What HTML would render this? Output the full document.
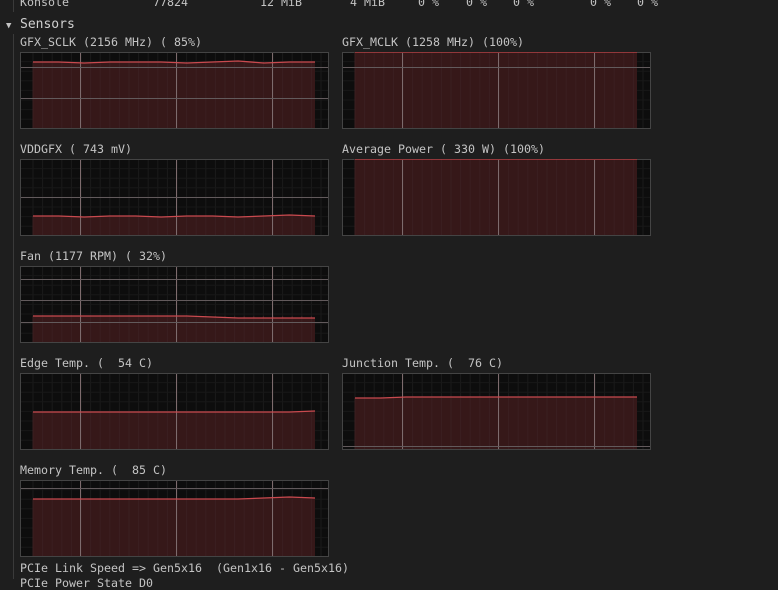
<!DOCTYPE html>
<html><head><meta charset="utf-8"><style>
body{margin:0;width:778px;height:579px;background:#1e1e1e;overflow:hidden;position:relative;font-family:"DejaVu Sans Mono","Liberation Mono",monospace;font-size:11.63px;color:#c4c4c4}
.t{position:absolute;white-space:pre;line-height:14px}
svg{position:absolute}
</style></head><body>
<div style="position:absolute;left:13px;top:0;width:1px;height:12px;background:#3a3a3a"></div>
<div style="position:absolute;left:13px;top:34px;width:1px;height:545px;background:#3a3a3a"></div>
<div class="t" style="left:20px;top:-5px">Konsole</div>
<div class="t" style="left:153px;top:-5px">77824</div>
<div class="t" style="left:260px;top:-5px">12 MiB</div>
<div class="t" style="left:350px;top:-5px">4 MiB</div>
<div class="t" style="left:418px;top:-5px">0 %</div>
<div class="t" style="left:466px;top:-5px">0 %</div>
<div class="t" style="left:513px;top:-5px">0 %</div>
<div class="t" style="left:590px;top:-5px">0 %</div>
<div class="t" style="left:637px;top:-5px">0 %</div>
<div class="t" style="left:6px;top:19px;font-size:9px">▼</div>
<div class="t" style="left:20px;top:18px;font-size:13px;color:#d0d0d0">Sensors</div>
<div class="t" style="left:20px;top:35px">GFX_SCLK (2156 MHz) ( 85%)</div>
<div class="t" style="left:342px;top:35px">GFX_MCLK (1258 MHz) (100%)</div>
<div class="t" style="left:20px;top:142px">VDDGFX ( 743 mV)</div>
<div class="t" style="left:342px;top:142px">Average Power ( 330 W) (100%)</div>
<div class="t" style="left:20px;top:249px">Fan (1177 RPM) ( 32%)</div>
<div class="t" style="left:20px;top:356px">Edge Temp. (  54 C)</div>
<div class="t" style="left:342px;top:356px">Junction Temp. (  76 C)</div>
<div class="t" style="left:20px;top:463px">Memory Temp. (  85 C)</div>
<div class="t" style="left:20px;top:561px">PCIe Link Speed =&gt; Gen5x16  (Gen1x16 - Gen5x16)</div>
<div class="t" style="left:20px;top:576px">PCIe Power State D0</div>
<div id="c"></div>
<script>
var charts=[
[20,52,10,[15,46],[10,10,11,10,10,10,11,10,9,11,10,10]],
[342,52,0,[15],[0,0,0,0,0,0,0,0,0,0,0,0]],
[20,159,57,[38],[57,57,58,57,57,58,57,57,58,57,56,57]],
[342,159,0,[],[0,0,0,0,0,0,0,0,0,0,0,0]],
[20,266,50,[13,34,56],[50,50,50,50,50,50,50,51,52,52,52,52]],
[20,373,39,[],[39,39,39,39,39,39,39,39,39,39,39,38]],
[342,373,25,[73],[25,25,24,24,24,24,24,24,24,24,24,24]],
[20,480,19,[8],[19,19,19,19,19,19,19,19,19,18,17,18]]];
var h='';
charts.forEach(function(c){
 var x=c[0],y=c[1],W=309,H=77,s='<svg style="left:'+x+'px;top:'+y+'px" width="'+W+'" height="'+H+'">';
 s+='<rect x="0.5" y="0.5" width="'+(W-1)+'" height="'+(H-1)+'" fill="#0d0d0d" stroke="#444"/>';
 for(var i=0;i<32;i++){var gx=13+i*9.6;s+='<line x1="'+gx+'" y1="1" x2="'+gx+'" y2="'+(H-1)+'" stroke="#1b1b1b"/>';}
 for(var j=1;j<8;j++){s+='<line x1="1" y1="'+(j*9.6)+'" x2="'+(W-1)+'" y2="'+(j*9.6)+'" stroke="#181818"/>';}
 var pts=c[4],p='';
 for(var k=0;k<pts.length;k++){p+=(13+k*(282/(pts.length-1)))+','+pts[k]+' ';}
 s+='<polygon points="13,'+(H-1)+' '+p+'295,'+(H-1)+'" fill="#361819"/>';
 for(var i=0;i<30;i++){var gx=13+i*9.6;s+='<line x1="'+gx+'" y1="'+c[2]+'" x2="'+gx+'" y2="'+(H-1)+'" stroke="#3b1f21"/>';}
 [60,156,252].forEach(function(v){s+='<line x1="'+(v+.5)+'" y1="1" x2="'+(v+.5)+'" y2="'+(H-1)+'" stroke="#7d6b6d"/>';});
 c[3].forEach(function(v){s+='<line x1="1" y1="'+(v+.5)+'" x2="'+(W-1)+'" y2="'+(v+.5)+'" stroke="#625a5c"/>';});
 s+='<polyline points="'+p+'" fill="none" stroke="#c94a4f" stroke-width="1.3"/>';
 s+='</svg>';h+=s;});
document.getElementById('c').innerHTML=h;
</script>
</body></html>
